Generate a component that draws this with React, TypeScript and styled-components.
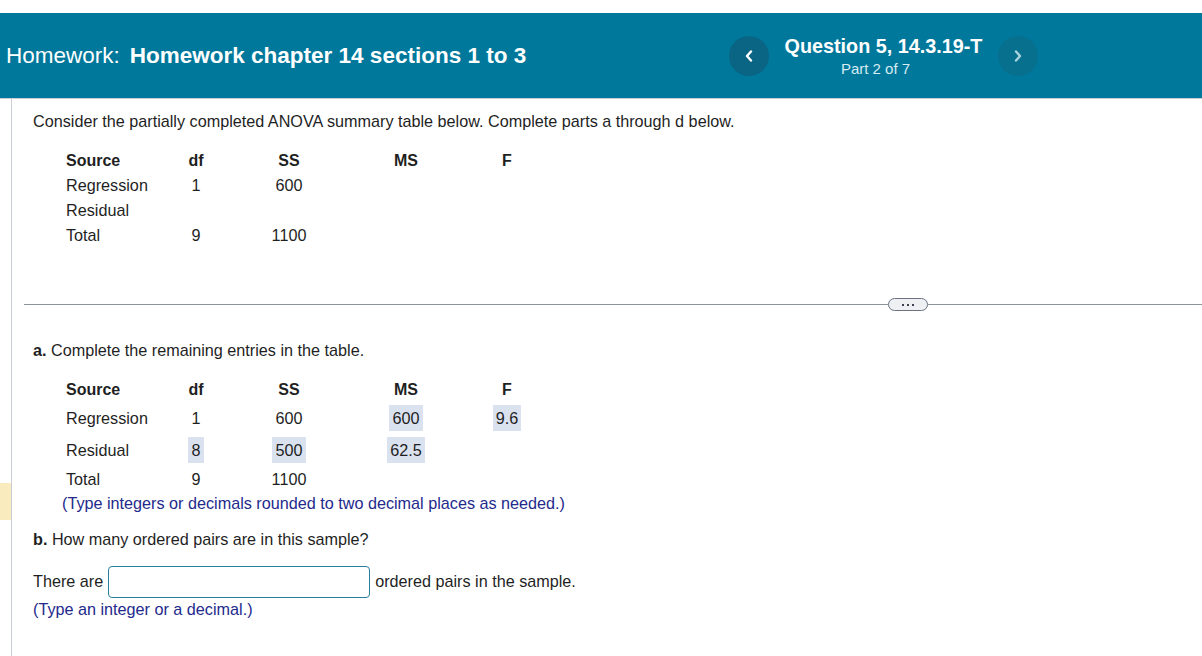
import React from 'react'
import styled, { createGlobalStyle } from 'styled-components'

const TEAL = '#00789b'
const TEXT = '#1f1f1f'
const HINT = '#232a8c'
const CELL_BG = '#dbe2ef'

const GlobalStyle = createGlobalStyle`
  html, body {
    margin: 0;
    padding: 0;
    background: #fff;
    font-family: "Liberation Sans", Arial, sans-serif;
    color: ${TEXT};
  }
`

const Page = styled.div`
  display: flex;
  flex-direction: column;
  width: 1202px;
  height: 656px;
  overflow: hidden;
`

const TopStrip = styled.div`
  height: 13px;
  background: #fff;
`

const Header = styled.header`
  display: flex;
  align-items: center;
  justify-content: space-between;
  height: 85px;
  padding-left: 6px;
  background: ${TEAL};
  border-bottom: 1px solid #c9ced6;
  color: #fff;
`

const Title = styled.h1`
  margin: 0;
  font-size: 22.5px;
  font-weight: normal;
  white-space: nowrap;
  b {
    font-weight: bold;
    margin-left: 10px;
  }
`

const Nav = styled.div`
  display: flex;
  align-items: center;
  margin-right: 164px;
`

const NavButton = styled.button<{ $muted?: boolean }>`
  display: flex;
  align-items: center;
  justify-content: center;
  width: 40px;
  height: 40px;
  padding: 0;
  border: none;
  border-radius: 50%;
  background: ${(p) => (p.$muted ? '#07708f' : '#0a6585')};
  color: ${(p) => (p.$muted ? '#a7d3df' : '#fff')};
  cursor: pointer;
`

const QuestionInfo = styled.div`
  display: flex;
  flex-direction: column;
  align-items: center;
  width: 229px;
`

const QuestionTitle = styled.div`
  font-size: 19.8px;
  font-weight: bold;
  line-height: 24px;
`

const PartLabel = styled.div`
  margin-top: 2px;
  padding-right: 16px;
  font-size: 15px;
  line-height: 18px;
  color: #d6ecf2;
`

const Body = styled.div`
  display: flex;
  flex: 1;
`

const Gutter = styled.div`
  width: 11px;
  border-right: 1px solid #c9ced6;
  flex-shrink: 0;
`

const Marker = styled.div`
  height: 37px;
  margin-top: 384px;
  background: #f9ebbd;
`

const Content = styled.main`
  flex: 1;
  padding: 12px 0 0 12px;
  font-size: 16.2px;
`

const Section = styled.div`
  padding-left: 9px;
`

const Line = styled.p<{ $top?: number }>`
  margin: ${(p) => p.$top ?? 0}px 0 0;
  line-height: 20px;
  white-space: nowrap;
  b {
    font-weight: bold;
  }
`

const Hint = styled(Line)<{ $indent?: number }>`
  color: ${HINT};
  padding-left: ${(p) => p.$indent ?? 0}px;
`

const Table = styled.table<{ $top: number }>`
  border-collapse: collapse;
  margin: ${(p) => p.$top}px 0 0 33px;
  font-size: 16.2px;
  th, td {
    padding: 0;
    text-align: center;
  }
  th:first-child, td:first-child {
    text-align: left;
  }
  col.source { width: 100px; }
  col.df { width: 60px; }
  col.ss { width: 126px; }
  col.ms { width: 108px; }
  col.f { width: 94px; }
`

const HeadRow = styled.tr`
  height: 25px;
  th {
    font-weight: bold;
    font-size: 16px;
  }
`

const Row = styled.tr<{ $h: number }>`
  height: ${(p) => p.$h}px;
`

const Cell = styled.span`
  display: inline-block;
  height: 26px;
  line-height: 26px;
  padding: 0 3px;
  background: ${CELL_BG};
`

const DividerRow = styled.div<{ $top: number }>`
  display: flex;
  align-items: center;
  margin-top: ${(p) => p.$top}px;
  height: 13px;
`

const Rule = styled.div<{ $w?: number }>`
  height: 1px;
  background: #8d939b;
  flex: ${(p) => (p.$w ? `0 0 ${p.$w}px` : '1')};
`

const Pill = styled.div`
  display: flex;
  align-items: center;
  justify-content: center;
  gap: 3px;
  width: 38px;
  height: 11px;
  border: 1px solid #6b7380;
  border-radius: 7px;
  background: #eef0f3;
  span {
    width: 2px;
    height: 2px;
    background: #3d4450;
  }
`

const AnswerRow = styled.div<{ $top: number }>`
  display: flex;
  align-items: center;
  gap: 5px;
  height: 32px;
  margin-top: ${(p) => p.$top}px;
  line-height: 20px;
  white-space: nowrap;
  span {
    margin-bottom: 3px;
  }
`

const AnswerInput = styled.input`
  box-sizing: border-box;
  width: 262px;
  height: 32px;
  border: 1px solid #2a7f9e;
  border-radius: 4px;
  outline: none;
`

const Chevron = ({ dir }: { dir: 'left' | 'right' }) => (
  <svg width="10" height="12" viewBox="0 0 10 12" fill="none">
    <polyline
      points={dir === 'left' ? '7,1.5 3,6 7,10.5' : '3,1.5 7,6 3,10.5'}
      stroke="currentColor"
      strokeWidth="2.4"
      strokeLinecap="round"
      strokeLinejoin="round"
    />
  </svg>
)

type RowData = { source: string; df?: React.ReactNode; ss?: React.ReactNode; ms?: React.ReactNode; f?: React.ReactNode; h: number }

const AnovaTable = ({ rows, top }: { rows: RowData[]; top: number }) => (
  <Table $top={top}>
    <colgroup>
      <col className="source" />
      <col className="df" />
      <col className="ss" />
      <col className="ms" />
      <col className="f" />
    </colgroup>
    <thead>
      <HeadRow>
        <th>Source</th>
        <th>df</th>
        <th>SS</th>
        <th>MS</th>
        <th>F</th>
      </HeadRow>
    </thead>
    <tbody>
      {rows.map((r) => (
        <Row key={r.source} $h={r.h}>
          <td>{r.source}</td>
          <td>{r.df}</td>
          <td>{r.ss}</td>
          <td>{r.ms}</td>
          <td>{r.f}</td>
        </Row>
      ))}
    </tbody>
  </Table>
)

export default function App() {
  return (
    <Page>
      <GlobalStyle />
      <TopStrip />
      <Header>
        <Title>
          Homework:<b>Homework chapter 14 sections 1 to 3</b>
        </Title>
        <Nav>
          <NavButton aria-label="Previous question">
            <Chevron dir="left" />
          </NavButton>
          <QuestionInfo>
            <QuestionTitle>Question 5, 14.3.19-T</QuestionTitle>
            <PartLabel>Part 2 of 7</PartLabel>
          </QuestionInfo>
          <NavButton $muted aria-label="Next question">
            <Chevron dir="right" />
          </NavButton>
        </Nav>
      </Header>
      <Body>
        <Gutter>
          <Marker />
        </Gutter>
        <Content>
          <Section>
            <Line>
              Consider the partially completed ANOVA summary table below. Complete parts a through d below.
            </Line>
            <AnovaTable
              top={17}
              rows={[
                { source: 'Regression', df: '1', ss: '600', h: 25 },
                { source: 'Residual', h: 25 },
                { source: 'Total', df: '9', ss: '1100', h: 25 },
              ]}
            />
          </Section>
          <DividerRow $top={50}>
            <Rule />
            <Pill>
              <span />
              <span />
              <span />
            </Pill>
            <Rule $w={274} />
          </DividerRow>
          <Section>
            <Line $top={29}>
              <b>a.</b> Complete the remaining entries in the table.
            </Line>
            <AnovaTable
              top={17}
              rows={[
                { source: 'Regression', df: '1', ss: '600', ms: <Cell>600</Cell>, f: <Cell>9.6</Cell>, h: 32 },
                { source: 'Residual', df: <Cell>8</Cell>, ss: <Cell>500</Cell>, ms: <Cell>62.5</Cell>, h: 32 },
                { source: 'Total', df: '9', ss: '1100', h: 27 },
              ]}
            />
            <Hint $indent={29}>(Type integers or decimals rounded to two decimal places as needed.)</Hint>
            <Line $top={16}>
              <b>b.</b> How many ordered pairs are in this sample?
            </Line>
            <AnswerRow $top={17}>
              <span>There are</span>
              <AnswerInput aria-label="ordered pairs" />
              <span>ordered pairs in the sample.</span>
            </AnswerRow>
            <Hint $top={1}>(Type an integer or a decimal.)</Hint>
          </Section>
        </Content>
      </Body>
    </Page>
  )
}
